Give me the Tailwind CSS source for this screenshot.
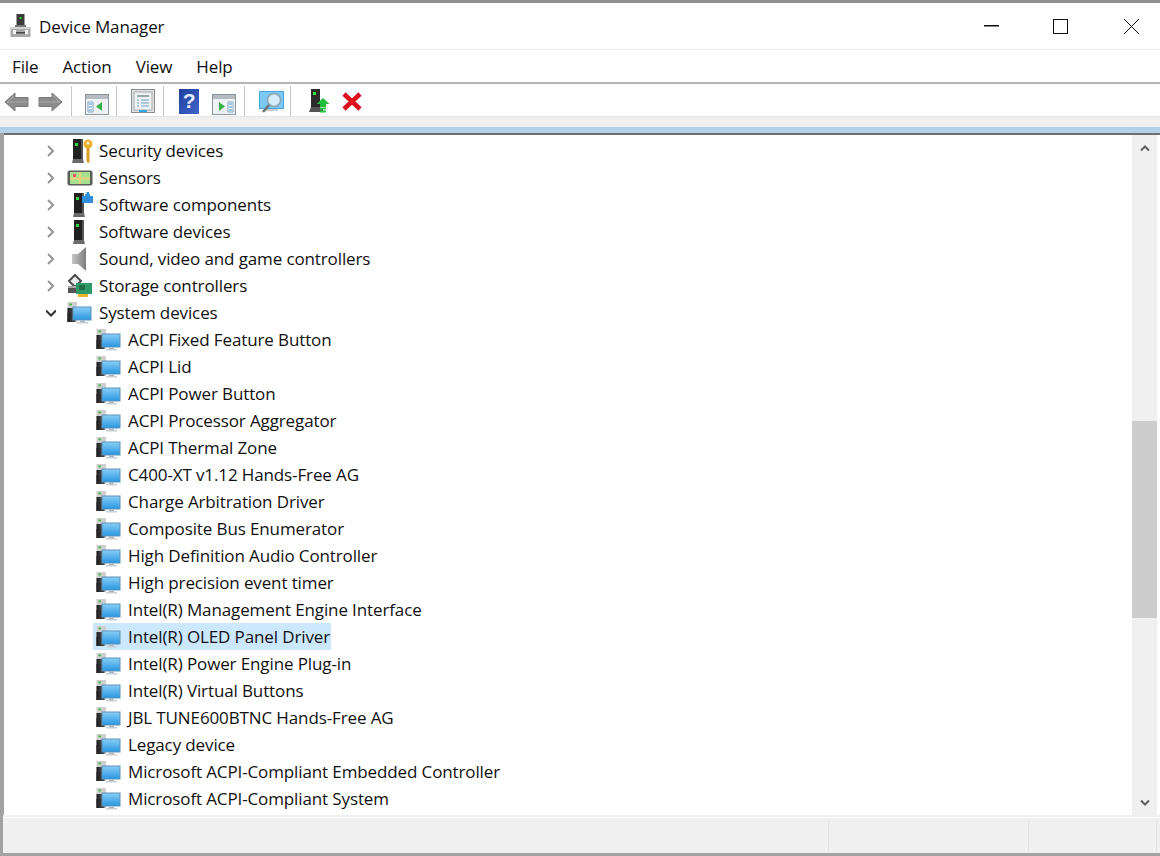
<!DOCTYPE html>
<html lang="en">
<head>
<meta charset="utf-8">
<title>Device Manager</title>
<script src="https://cdn.jsdelivr.net/npm/@tailwindcss/browser@4"></script>
</head>
<body class="m-0 bg-white">
<svg width="0" height="0" class="absolute">
  <defs>
    <linearGradient id="scr" x1="0" y1="0" x2="0" y2="1"><stop offset="0" stop-color="#86ccf4"/><stop offset="1" stop-color="#2b98e2"/></linearGradient>
    <linearGradient id="tower" x1="0" y1="0" x2="1" y2="0"><stop offset="0" stop-color="#1c1c1c"/><stop offset="1" stop-color="#4a4a4a"/></linearGradient>
    <linearGradient id="spk" x1="0" y1="0" x2="1" y2="0"><stop offset="0" stop-color="#c6c6c6"/><stop offset="1" stop-color="#7e7e7e"/></linearGradient>
    <linearGradient id="hlp" x1="0" y1="0" x2="1" y2="1"><stop offset="0" stop-color="#1f3f9f"/><stop offset="1" stop-color="#3f66c8"/></linearGradient>
    <symbol id="sys" viewBox="0 0 26 22">
      <rect x="0.500" y="0" width="9.500" height="20" fill="#cfcfcf"/>
      <rect x="0.500" y="6" width="5.500" height="14" fill="url(#tower)"/>
      <rect x="0.500" y="11" width="8" height="9" fill="url(#tower)"/>
      <rect x="2.500" y="1.500" width="2.500" height="1.800" fill="#3fb53f"/>
      <rect x="5.500" y="4.500" width="19" height="14" fill="#5f93bb"/>
      <rect x="6.500" y="5.500" width="17" height="12" fill="url(#scr)"/>
      <rect x="13" y="18.500" width="5" height="1.500" fill="#aab4bc"/>
      <rect x="10" y="20" width="11" height="1.500" fill="#c8ced4"/>
    </symbol>
    <symbol id="blk" viewBox="0 0 14 26">
      <path d="M2 1h10v20H2z" fill="#202020"/>
      <path d="M10 1h2v20h-2z" fill="#555"/>
      <rect x="4" y="5" width="3" height="3" fill="#38d838"/>
      <path d="M2 21h10l1 4H1z" fill="#6a6a6a"/>
    </symbol>
    <symbol id="chev-r" viewBox="0 0 10 12"><path d="M2 1 7 6l-5 5" fill="none" stroke="#949494" stroke-width="2"/></symbol>
  </defs>
</svg>

<div class="flex h-[856px] w-[1160px] flex-col overflow-hidden bg-white text-[17px] leading-none tracking-[-0.12px] text-[#111] [font-family:'Open_Sans','Noto_Sans',sans-serif]">
  <div class="h-[3px] shrink-0 bg-[#8f8f8f]"></div>

  <!-- title bar -->
  <div class="flex h-[47px] shrink-0 items-center border-b border-[#ececec]">
    <svg class="ml-[10px] h-[24px] w-[21px] shrink-0" viewBox="0 0 21 24">
      <rect x="6.500" y="0" width="8" height="12" fill="#3a3a3a"/>
      <rect x="9.500" y="3" width="2" height="2" fill="#36c536"/>
      <path d="M5 11h11v3H5z" fill="#777"/>
      <rect x="0.500" y="13" width="20" height="10" fill="#a9a9a9"/>
      <rect x="0.500" y="13" width="20" height="2" fill="#d4d4d4"/>
      <rect x="3" y="16" width="3" height="4" fill="#f4f4f4"/>
      <rect x="15" y="16" width="3" height="4" fill="#f4f4f4"/>
      <rect x="6" y="18" width="9" height="1.500" fill="#444"/>
    </svg>
    <span class="ml-[8px]">Device Manager</span>
    <svg class="ml-auto h-[2px] w-[15px] shrink-0" viewBox="0 0 15 2"><rect width="15" height="1.500" fill="#111"/></svg>
    <svg class="ml-[54px] h-[15px] w-[15px] shrink-0" viewBox="0 0 15 15"><rect x="0.500" y="0.500" width="14" height="14" fill="none" stroke="#111"/></svg>
    <svg class="mr-[21px] ml-[56px] h-[15px] w-[15px] shrink-0" viewBox="0 0 15 15"><path d="M0 0l15 15M15 0 0 15" stroke="#111" stroke-width="1"/></svg>
  </div>

  <!-- menu -->
  <div class="flex h-[34px] shrink-0 items-center gap-[24px] border-b-2 border-[#b4b4b4] pt-[1px] pl-[12px]">
    <span>File</span><span>Action</span><span>View</span><span>Help</span>
  </div>

  <!-- toolbar -->
  <div class="flex h-[33px] shrink-0 items-start border-b border-[#e6e6e6] bg-white">
    <svg class="mt-[8px] ml-[4px] h-[20px] w-[25px]" viewBox="0 0 25 20"><path d="M11 1 1 10l10 9v-4.500h13v-9H11z" fill="#8c8c8c" stroke="#7a7a7a"/><path d="M10 4 3 10h21" fill="none" stroke="#aaa"/></svg>
    <svg class="mt-[8px] ml-[9px] h-[20px] w-[25px]" viewBox="0 0 25 20"><path d="M14 1l10 9-10 9v-4.500H1v-9h13z" fill="#8c8c8c" stroke="#7a7a7a"/><path d="M1 10h21l-7-6" fill="none" stroke="#aaa"/></svg>
    <div class="mt-[2px] ml-[8px] h-[30px] w-px bg-[#c8c8c8]"></div>
    <svg class="mt-[10px] ml-[13px] h-[21px] w-[24px]" viewBox="0 0 24 21"><rect x="0.500" y="0.500" width="23" height="20" fill="#eef2f4" stroke="#8c959c"/><rect x="1" y="1" width="22" height="4" fill="#b4bbc1"/><path d="M3 8h5v10H3z" fill="#fff" stroke="#7ea6c4"/><path d="M4 10h3M4 13h3M4 16h3" stroke="#3a87c4"/><path d="M17 8v9l-6-4.500z" fill="#35b04a"/></svg>
    <div class="mt-[2px] ml-[7px] h-[30px] w-px bg-[#c8c8c8]"></div>
    <svg class="mt-[5px] ml-[14px] h-[24px] w-[24px]" viewBox="0 0 24 24"><rect x="0.500" y="0.500" width="23" height="23" fill="#dfe3e6" stroke="#8b8b8b"/><rect x="3" y="3" width="18" height="18" fill="#eef1f3" stroke="#aaa"/><path d="M6 7h12" stroke="#9aa" stroke-width="2"/><path d="M6 11h2M10 11h8M6 14h2M10 14h8M6 17h2M10 17h8" stroke="#6aa5cf"/><rect x="8" y="21" width="8" height="2" fill="#2ea6e8"/></svg>
    <div class="mt-[2px] ml-[8px] h-[30px] w-px bg-[#c8c8c8]"></div>
    <svg class="mt-[5px] ml-[15px] h-[25px] w-[20px]" viewBox="0 0 20 25"><rect width="20" height="25" fill="url(#hlp)"/><text x="10" y="19" text-anchor="middle" font-family="Liberation Sans" font-weight="700" font-size="21" fill="#e4eafa">?</text></svg>
    <svg class="mt-[10px] ml-[13px] h-[21px] w-[24px]" viewBox="0 0 24 21"><rect x="0.500" y="0.500" width="23" height="20" fill="#eef2f4" stroke="#8c959c"/><rect x="1" y="1" width="22" height="4" fill="#b4bbc1"/><path d="M16 8h5v10h-5z" fill="#fff" stroke="#7ea6c4"/><path d="M17 10h3M17 13h3M17 16h3" stroke="#3a87c4"/><path d="M7 8v9l6-4.500z" fill="#35b04a"/></svg>
    <div class="mt-[2px] ml-[8px] h-[30px] w-px bg-[#c8c8c8]"></div>
    <svg class="mt-[7px] ml-[14px] h-[24px] w-[25px]" viewBox="0 0 25 24"><rect x="0.500" y="0.500" width="24" height="17" fill="#7cc8f4" stroke="#4aa6dc"/><rect x="6" y="18" width="13" height="2" fill="#c8ced4"/><circle cx="15" cy="9" r="6.500" fill="#d6edfa" stroke="#8ea3b0" stroke-width="1.500"/><path d="M10 14l-6 7" stroke="#6a7178" stroke-width="2.500"/></svg>
    <div class="mt-[2px] ml-[6px] h-[30px] w-px bg-[#c8c8c8]"></div>
    <svg class="mt-[5px] ml-[18px] h-[25px] w-[21px]" viewBox="0 0 21 25"><path d="M2 0h9v18H2z" fill="#2a2a2a"/><rect x="4" y="3" width="3" height="3" fill="#35e035"/><path d="M2 18h9v2h3v3H0z" fill="#555"/><path d="M14 9l6.500 6H17v3h-6v-3H7.500z" fill="#21bc3a"/><path d="M11 19.500h6M11 22.500h6" stroke="#21c43e" stroke-width="1.800"/></svg>
    <svg class="mt-[8px] ml-[12px] h-[19px] w-[20px]" viewBox="0 0 20 19"><path d="M2 2l16 15M18 2 2 17" stroke="#dc0f1c" stroke-width="4.500"/></svg>
  </div>

  <div class="h-[10px] shrink-0 bg-[#f0f0f0]"></div>
  <div class="h-[6px] shrink-0 bg-[#b4cfe8]"></div>

  <!-- main tree -->
  <div class="flex h-[682px] shrink-0">
    <div class="w-[4px] shrink-0 bg-[#a2a2a2]"></div>
    <div class="flex min-w-0 flex-1 flex-col">
      <div class="h-[2px] shrink-0 bg-[#6e6e6e]"></div>
      <div class="flex min-h-0 flex-1">
        <div class="min-w-0 flex-1 overflow-hidden pt-[2px] pl-[1px]">
          <!-- Security devices -->
          <div class="flex h-[27px] items-center"><svg class="ml-[41px] h-[12px] w-[10px]"><use href="#chev-r"/></svg>
            <span class="relative ml-[11px] h-[26px] w-[26px]"><svg class="absolute left-[4px] top-0 h-[26px] w-[14px]"><use href="#blk"/></svg><svg class="absolute left-[16px] top-[1px] h-[24px] w-[10px]" viewBox="0 0 10 24"><circle cx="5" cy="5" r="4.500" fill="#e6b230"/><circle cx="5" cy="4" r="1.500" fill="#fff3c8"/><path d="M3.500 9h3v14l-1.500 1-1.500-2z" fill="#d69e22"/></svg></span>
            <span class="ml-[6px]">Security devices</span></div>
          <!-- Sensors -->
          <div class="flex h-[27px] items-center"><svg class="ml-[41px] h-[12px] w-[10px]"><use href="#chev-r"/></svg>
            <svg class="ml-[11px] h-[16px] w-[26px]" viewBox="0 0 26 16"><rect x="0.500" y="0.500" width="25" height="15" rx="2" fill="#5c5c5c"/><rect x="3" y="2" width="20" height="12" fill="#a9e08f"/><path d="M3 8.500h20M13 2v12" stroke="#f2d27a" stroke-width="1.800"/><rect x="6" y="4" width="3" height="3" fill="#e5586a"/></svg>
            <span class="ml-[6px]">Sensors</span></div>
          <!-- Software components -->
          <div class="flex h-[27px] items-center"><svg class="ml-[41px] h-[12px] w-[10px]"><use href="#chev-r"/></svg>
            <span class="relative ml-[11px] h-[26px] w-[26px]"><svg class="absolute left-[5px] top-0 h-[26px] w-[14px]"><use href="#blk"/></svg><svg class="absolute left-[15px] top-0 h-[14px] w-[11px]" viewBox="0 0 11 14"><path d="M0 4h3V2h1.500V0H7v2h1v2h3v7H0z" fill="#2f8fdc"/></svg></span>
            <span class="ml-[6px]">Software components</span></div>
          <!-- Software devices -->
          <div class="flex h-[27px] items-center"><svg class="ml-[41px] h-[12px] w-[10px]"><use href="#chev-r"/></svg>
            <span class="relative ml-[11px] h-[26px] w-[26px]"><svg class="absolute left-[5px] top-0 h-[26px] w-[14px]"><use href="#blk"/></svg></span>
            <span class="ml-[6px]">Software devices</span></div>
          <!-- Sound -->
          <div class="flex h-[27px] items-center"><svg class="ml-[41px] h-[12px] w-[10px]"><use href="#chev-r"/></svg>
            <svg class="ml-[11px] h-[24px] w-[26px]" viewBox="0 0 26 24"><path d="M5 7h6l8-7v24l-8-7H5z" fill="url(#spk)"/></svg>
            <span class="ml-[6px]">Sound, video and game controllers</span></div>
          <!-- Storage -->
          <div class="flex h-[27px] items-center"><svg class="ml-[41px] h-[12px] w-[10px]"><use href="#chev-r"/></svg>
            <svg class="ml-[11px] h-[24px] w-[26px]" viewBox="0 0 26 24"><path d="M8 1 2 7l6 6 6-6z" fill="#ececec" stroke="#4a4a4a" stroke-width="2"/><rect x="1" y="12" width="13" height="7" fill="#555"/><rect x="1" y="12" width="13" height="2" fill="#aaa"/><rect x="9" y="9" width="16" height="11" fill="#2e9a68"/><rect x="12" y="11" width="6" height="5" fill="#1f6e48"/><rect x="11" y="20" width="10" height="3" fill="#e8b62c"/></svg>
            <span class="ml-[6px]">Storage controllers</span></div>
          <!-- System devices -->
          <div class="flex h-[27px] items-center"><svg class="ml-[41px] h-[12px] w-[10px]" viewBox="0 0 10 12"><path d="M0 3.500 5 8.500l5-5" fill="none" stroke="#333" stroke-width="2"/></svg>
            <svg class="ml-[11px] h-[22px] w-[26px]"><use href="#sys"/></svg>
            <span class="ml-[6px]">System devices</span></div>

          <div class="flex h-[27px] items-center pl-[91px]"><svg class="h-[22px] w-[26px]"><use href="#sys"/></svg><span class="ml-[6px]">ACPI Fixed Feature Button</span></div>
          <div class="flex h-[27px] items-center pl-[91px]"><svg class="h-[22px] w-[26px]"><use href="#sys"/></svg><span class="ml-[6px]">ACPI Lid</span></div>
          <div class="flex h-[27px] items-center pl-[91px]"><svg class="h-[22px] w-[26px]"><use href="#sys"/></svg><span class="ml-[6px]">ACPI Power Button</span></div>
          <div class="flex h-[27px] items-center pl-[91px]"><svg class="h-[22px] w-[26px]"><use href="#sys"/></svg><span class="ml-[6px]">ACPI Processor Aggregator</span></div>
          <div class="flex h-[27px] items-center pl-[91px]"><svg class="h-[22px] w-[26px]"><use href="#sys"/></svg><span class="ml-[6px]">ACPI Thermal Zone</span></div>
          <div class="flex h-[27px] items-center pl-[91px]"><svg class="h-[22px] w-[26px]"><use href="#sys"/></svg><span class="ml-[6px]">C400-XT v1.12 Hands-Free AG</span></div>
          <div class="flex h-[27px] items-center pl-[91px]"><svg class="h-[22px] w-[26px]"><use href="#sys"/></svg><span class="ml-[6px]">Charge Arbitration Driver</span></div>
          <div class="flex h-[27px] items-center pl-[91px]"><svg class="h-[22px] w-[26px]"><use href="#sys"/></svg><span class="ml-[6px]">Composite Bus Enumerator</span></div>
          <div class="flex h-[27px] items-center pl-[91px]"><svg class="h-[22px] w-[26px]"><use href="#sys"/></svg><span class="ml-[6px]">High Definition Audio Controller</span></div>
          <div class="flex h-[27px] items-center pl-[91px]"><svg class="h-[22px] w-[26px]"><use href="#sys"/></svg><span class="ml-[6px]">High precision event timer</span></div>
          <div class="flex h-[27px] items-center pl-[91px]"><svg class="h-[22px] w-[26px]"><use href="#sys"/></svg><span class="ml-[6px]">Intel(R) Management Engine Interface</span></div>
          <div class="flex h-[27px] items-center pl-[91px]"><div class="-ml-[3px] flex h-[27px] w-[238px] items-center bg-[#cce8ff] pl-[3px]"><svg class="h-[22px] w-[26px]"><use href="#sys"/></svg><span class="ml-[6px]">Intel(R) OLED Panel Driver</span></div></div>
          <div class="flex h-[27px] items-center pl-[91px]"><svg class="h-[22px] w-[26px]"><use href="#sys"/></svg><span class="ml-[6px]">Intel(R) Power Engine Plug-in</span></div>
          <div class="flex h-[27px] items-center pl-[91px]"><svg class="h-[22px] w-[26px]"><use href="#sys"/></svg><span class="ml-[6px]">Intel(R) Virtual Buttons</span></div>
          <div class="flex h-[27px] items-center pl-[91px]"><svg class="h-[22px] w-[26px]"><use href="#sys"/></svg><span class="ml-[6px]">JBL TUNE600BTNC Hands-Free AG</span></div>
          <div class="flex h-[27px] items-center pl-[91px]"><svg class="h-[22px] w-[26px]"><use href="#sys"/></svg><span class="ml-[6px]">Legacy device</span></div>
          <div class="flex h-[27px] items-center pl-[91px]"><svg class="h-[22px] w-[26px]"><use href="#sys"/></svg><span class="ml-[6px]">Microsoft ACPI-Compliant Embedded Controller</span></div>
          <div class="flex h-[27px] items-center pl-[91px]"><svg class="h-[22px] w-[26px]"><use href="#sys"/></svg><span class="ml-[6px]">Microsoft ACPI-Compliant System</span></div>
          <div class="flex h-[27px] items-center pl-[91px]"><svg class="h-[22px] w-[26px]"><use href="#sys"/></svg></div>
        </div>
        <!-- scrollbar -->
        <div class="flex w-[25px] shrink-0 flex-col bg-[#f0f0f0]">
          <div class="flex h-[25px] shrink-0 items-center justify-center"><svg class="h-[8px] w-[10px]" viewBox="0 0 10 8"><path d="M1 6.500 5 2.500l4 4" fill="none" stroke="#606060" stroke-width="2"/></svg></div>
          <div class="mt-[261px] h-[197px] shrink-0 bg-[#cdcdcd]"></div>
          <div class="mt-auto flex h-[25px] shrink-0 items-center justify-center"><svg class="h-[8px] w-[10px]" viewBox="0 0 10 8"><path d="M1 1.500 5 5.500l4-4" fill="none" stroke="#606060" stroke-width="2"/></svg></div>
        </div>
        <div class="w-[3px] shrink-0 bg-white"></div>
      </div>
    </div>
  </div>

  <!-- status bar -->
  <div class="flex h-[41px] shrink-0">
    <div class="w-[3px] shrink-0 bg-[#a2a2a2]"></div>
    <div class="flex flex-1 flex-col">
      <div class="h-[2px] shrink-0 bg-[#f0f0f0]"></div>
      <div class="h-[1px] shrink-0 bg-white"></div>
      <div class="flex flex-1 bg-[#f0f0f0] pt-[3px] pb-[1px]">
        <div class="w-[826px] shrink-0 border-r border-[#e2e2e2]"></div>
        <div class="w-[200px] shrink-0 border-r border-[#e2e2e2]"></div>
        <div class="w-[128px] shrink-0 border-r border-[#e2e2e2]"></div>
      </div>
      <div class="h-[3px] shrink-0 bg-[#a2a2a2]"></div>
    </div>
  </div>
</div>
</body>
</html>
